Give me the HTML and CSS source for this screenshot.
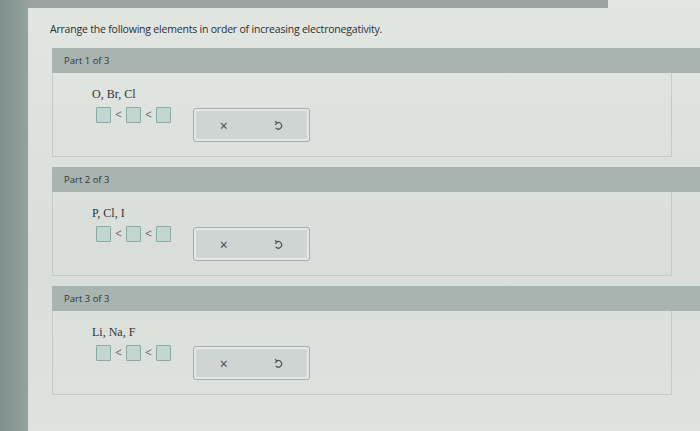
FILE: index.html
```html
<!DOCTYPE html>
<html>
<head>
<meta charset="utf-8">
<link rel="stylesheet" href="styles.css">
</head>
<body>
<div class="screen">
  <div class="side"></div>
  <div class="main">
    <div class="topbar"></div>
    <p class="prompt">Arrange the following elements in order of increasing electronegativity.</p>
    <div class="part">
      <div class="part-head">Part 1 of 3</div>
      <div class="part-body">
        <div class="question">
          <div class="elements">O, Br, Cl</div>
          <div class="answer">
            <span class="box"></span><span class="lt">&lt;</span><span class="box"></span><span class="lt">&lt;</span><span class="box"></span>
          </div>
        </div>
        <div class="tools">
          <span class="x">×</span>
          <svg class="undo" viewBox="0 0 12 12" width="11" height="11"><path d="M4 3.2 A3.6 3.6 0 1 1 3 8.6" fill="none" stroke="#555" stroke-width="1.4"/><path d="M2.2 1.4 L4.6 3.2 L2.4 5.2" fill="none" stroke="#555" stroke-width="1.3"/></svg>
        </div>
      </div>
    </div>
    <div class="part">
      <div class="part-head">Part 2 of 3</div>
      <div class="part-body">
        <div class="question">
          <div class="elements">P, Cl, I</div>
          <div class="answer">
            <span class="box"></span><span class="lt">&lt;</span><span class="box"></span><span class="lt">&lt;</span><span class="box"></span>
          </div>
        </div>
        <div class="tools">
          <span class="x">×</span>
          <svg class="undo" viewBox="0 0 12 12" width="11" height="11"><path d="M4 3.2 A3.6 3.6 0 1 1 3 8.6" fill="none" stroke="#555" stroke-width="1.4"/><path d="M2.2 1.4 L4.6 3.2 L2.4 5.2" fill="none" stroke="#555" stroke-width="1.3"/></svg>
        </div>
      </div>
    </div>
    <div class="part">
      <div class="part-head">Part 3 of 3</div>
      <div class="part-body">
        <div class="question">
          <div class="elements">Li, Na, F</div>
          <div class="answer">
            <span class="box"></span><span class="lt">&lt;</span><span class="box"></span><span class="lt">&lt;</span><span class="box"></span>
          </div>
        </div>
        <div class="tools">
          <span class="x">×</span>
          <svg class="undo" viewBox="0 0 12 12" width="11" height="11"><path d="M4 3.2 A3.6 3.6 0 1 1 3 8.6" fill="none" stroke="#555" stroke-width="1.4"/><path d="M2.2 1.4 L4.6 3.2 L2.4 5.2" fill="none" stroke="#555" stroke-width="1.3"/></svg>
        </div>
      </div>
    </div>
  </div>
</div>
</body>
</html>
```
FILE: styles.css
```css
html, body {
  margin: 0;
  padding: 0;
  width: 700px;
  height: 431px;
  overflow: hidden;
  background: #dde2df;
}
.screen {
  display: flex;
  height: 431px;
}
.side {
  width: 28px;
  flex: none;
  background: linear-gradient(90deg, #7f8f8b, #93a39f);
}
.main {
  flex: 1;
  background: linear-gradient(180deg, #e2e6e3, #d9dedb 60%, #dfe3e0);
  font-family: "Open Sans", "DejaVu Sans", sans-serif;
  color: #2b2f2e;
}
.topbar {
  height: 8px;
  width: 580px;
  background: #9aa39f;
}
.prompt {
  margin: 14px 0 0 22px;
  font-size: 10.5px;
  letter-spacing: -0.2px;
  height: 18px;
}
.part {
  margin: 8px 0 10px 24px;
}
.part-head {
  height: 25px;
  line-height: 25px;
  background: #a9b4b0;
  padding-left: 12px;
  font-size: 9.5px;
  color: #333;
}
.part-body {
  height: 84px;
  border: 1px solid #c3cac7;
  border-top: none;
  width: 620px;
  display: flex;
  align-items: flex-start;
  padding-left: 40px;
  box-sizing: border-box;
}
.question {
  padding-top: 14px;
}
.elements {
  font-family: "Liberation Serif", "DejaVu Serif", serif;
  font-size: 12px;
  color: #333;
  height: 16px;
  margin-left: -1px;
}
.answer {
  display: flex;
  align-items: center;
  margin-top: 3px;
  margin-left: 3px;
}
.box {
  width: 13px;
  height: 14px;
  border: 1px solid #89aba1;
  background: #c3d6d1;
  border-radius: 1px;
}
.lt {
  font-size: 12px;
  color: #5a6b66;
  margin: 0 4px;
}
.tools {
  margin-top: 35px;
  margin-left: 22px;
  width: 117px;
  height: 34px;
  border: 1px solid #a6adaa;
  border-radius: 3px;
  background: #cfd5d2;
  box-shadow: inset 0 0 0 2px #e3e7e5;
  display: flex;
  align-items: center;
  justify-content: space-between;
  padding: 0 25px 0 26px;
  box-sizing: border-box;
}
.x {
  font-size: 14px;
  color: #444;
}
.undo {
  display: block;
}
```
